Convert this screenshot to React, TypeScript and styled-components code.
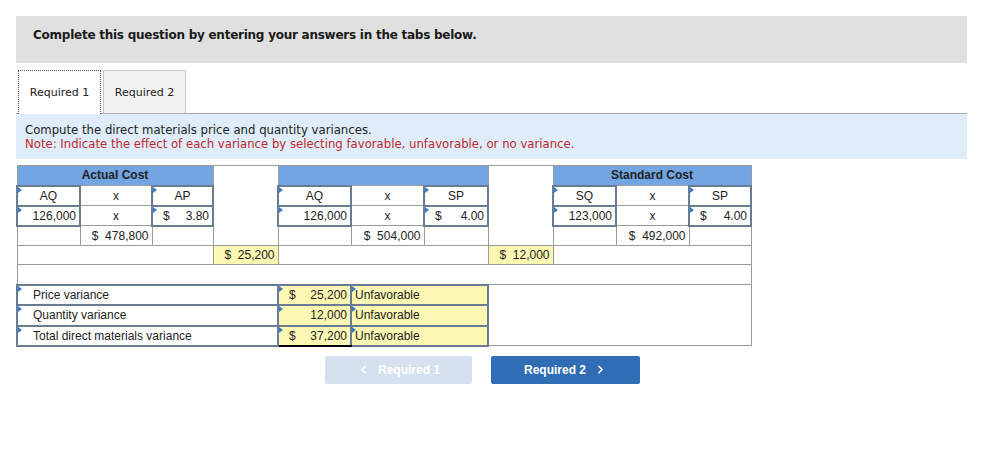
import React from "react";
import styled, { createGlobalStyle, css } from "styled-components";
import { ChevronLeft, ChevronRight } from "lucide-react";

const GlobalStyle = createGlobalStyle`
  body {
    margin: 0;
    background: #fff;
    font-family: "DejaVu Sans", Verdana, sans-serif;
    color: #222;
  }
`;

const Page = styled.div`
  width: 951px;
  padding: 16px;
`;

const Banner = styled.div`
  height: 47px;
  box-sizing: border-box;
  background: #e0e0e0;
  padding: 12px 0 0 17px;
  font-size: 12px;
  letter-spacing: -0.25px;
  font-weight: bold;
  color: #1a1a1a;
`;

const TabBar = styled.div`
  margin-top: 7px;
  height: 43px;
  display: flex;
  align-items: flex-end;
  gap: 2px;
  padding-left: 2px;
  border-bottom: 1px solid #a9a9a9;
`;

const Tab = styled.div<{ $active?: boolean }>`
  width: 83px;
  height: 43px;
  box-sizing: border-box;
  display: flex;
  align-items: center;
  justify-content: center;
  font-size: 11px;
  color: #222;
  ${(p) =>
    p.$active
      ? css`
          background: #fff;
          border: 1px dotted #555;
          border-bottom: none;
          height: 44px;
          margin-bottom: -1px;
        `
      : css`
          background: #f2f2f2;
          border: 1px solid #c8c8c8;
          border-bottom: none;
        `}
`;

const Instructions = styled.div`
  background: #deedf9;
  height: 45px;
  box-sizing: border-box;
  padding: 9px 9px;
  font-size: 11.7px;
  line-height: 14px;
`;

const Note = styled.div`
  color: #c0282d;
`;

const Grid = styled.table`
  margin-top: 6px;
  border-collapse: collapse;
  table-layout: fixed;
  width: 734px;
  font-family: "Liberation Sans", Arial, sans-serif;
  font-size: 12px;
  line-height: 14px;
  color: #222;
  border: 1px solid #9a9a9a;
`;

const Row = styled.tr<{ $h: number }>`
  height: ${(p) => p.$h}px;
`;

const Cell = styled.td<{ $align?: "left" | "center" | "right"; $fill?: string }>`
  padding: 0 3px;
  border: 1px solid #9a9a9a;
  text-align: ${(p) => p.$align || "center"};
  background: ${(p) => p.$fill || "#fff"};
  white-space: nowrap;
  vertical-align: middle;
`;

const HeadCell = styled.td<{ $blue?: boolean }>`
  padding: 0;
  border: 1px solid #9a9a9a;
  background: ${(p) => (p.$blue ? "#72a5e1" : "#fff")};
  text-align: center;
  font-weight: bold;
  color: #1f1f1f;
`;

const InputCell = styled.td<{ $align?: "left" | "center" | "right"; $fill?: string; $total?: boolean; $pad?: number }>`
  position: relative;
  padding: 0 3px 0 ${(p) => (p.$pad ?? 3)}px;
  border: 2px solid #687d93;
  ${(p) => p.$total && "border-bottom: 2px solid #000;"}
  text-align: ${(p) => p.$align || "center"};
  background: ${(p) => p.$fill || "#fff"};
  white-space: nowrap;
  vertical-align: middle;

  &::before {
    content: "";
    position: absolute;
    left: 0;
    top: 0;
    border-top: 3px solid transparent;
    border-bottom: 3px solid transparent;
    border-left: 4px solid #3b79c9;
  }
`;

const Money = styled.div`
  display: flex;
  justify-content: space-between;
`;

const ButtonRow = styled.div`
  display: flex;
  gap: 19px;
  margin-top: 9px;
  padding-left: 309px;
`;

const NavButton = styled.button<{ $disabled?: boolean }>`
  width: ${(p) => (p.$disabled ? 147 : 149)}px;
  height: 28px;
  border: none;
  border-radius: 2px;
  display: flex;
  align-items: center;
  justify-content: center;
  gap: 8px;
  font-family: "Liberation Sans", Arial, sans-serif;
  font-size: 12px;
  font-weight: bold;
  color: #fff;
  background: ${(p) => (p.$disabled ? "#d5e1ef" : "#2f6db4")};
`;

const YELLOW = "#fcf8b4";

export default function App() {
  return (
    <>
      <GlobalStyle />
      <Page>
        <Banner>Complete this question by entering your answers in the tabs below.</Banner>
        <TabBar>
          <Tab $active>Required 1</Tab>
          <Tab>Required 2</Tab>
        </TabBar>
        <Instructions>
          <div>Compute the direct materials price and quantity variances.</div>
          <Note>Note: Indicate the effect of each variance by selecting favorable, unfavorable, or no variance.</Note>
        </Instructions>

        <Grid>
          <colgroup>
            <col style={{ width: 63 }} />
            <col style={{ width: 72 }} />
            <col style={{ width: 61 }} />
            <col style={{ width: 65 }} />
            <col style={{ width: 73 }} />
            <col style={{ width: 73 }} />
            <col style={{ width: 64 }} />
            <col style={{ width: 65 }} />
            <col style={{ width: 63 }} />
            <col style={{ width: 73 }} />
            <col style={{ width: 62 }} />
          </colgroup>
          <tbody>
            <Row $h={20}>
              <HeadCell colSpan={3} $blue>Actual Cost</HeadCell>
              <Cell rowSpan={4} />
              <HeadCell colSpan={3} $blue />
              <Cell rowSpan={4} />
              <HeadCell colSpan={3} $blue>Standard Cost</HeadCell>
            </Row>
            <Row $h={20}>
              <InputCell>AQ</InputCell>
              <Cell>x</Cell>
              <InputCell>AP</InputCell>
              <InputCell>AQ</InputCell>
              <Cell>x</Cell>
              <InputCell>SP</InputCell>
              <InputCell>SQ</InputCell>
              <Cell>x</Cell>
              <InputCell>SP</InputCell>
            </Row>
            <Row $h={20}>
              <InputCell $align="right">126,000</InputCell>
              <Cell>x</Cell>
              <InputCell $pad={10}><Money><span>$</span><span>3.80</span></Money></InputCell>
              <InputCell $align="right">126,000</InputCell>
              <Cell>x</Cell>
              <InputCell $pad={10}><Money><span>$</span><span>4.00</span></Money></InputCell>
              <InputCell $align="right">123,000</InputCell>
              <Cell>x</Cell>
              <InputCell $pad={10}><Money><span>$</span><span>4.00</span></Money></InputCell>
            </Row>
            <Row $h={20}>
              <Cell />
              <Cell $align="right">$&nbsp;&nbsp;478,800</Cell>
              <Cell />
              <Cell />
              <Cell $align="right">$&nbsp;&nbsp;504,000</Cell>
              <Cell />
              <Cell />
              <Cell $align="right">$&nbsp;&nbsp;492,000</Cell>
              <Cell />
            </Row>
            <Row $h={19}>
              <Cell colSpan={3} />
              <Cell $align="right" $fill={YELLOW}>$&nbsp;&nbsp;25,200</Cell>
              <Cell colSpan={3} />
              <Cell $align="right" $fill={YELLOW}>$&nbsp;&nbsp;12,000</Cell>
              <Cell colSpan={3} />
            </Row>
            <Row $h={20}>
              <Cell colSpan={11} />
            </Row>
            <Row $h={20}>
              <InputCell colSpan={4} $align="left" $pad={15}>Price variance</InputCell>
              <InputCell $fill={YELLOW} $pad={10}><Money><span>$</span><span>25,200</span></Money></InputCell>
              <InputCell colSpan={2} $align="left" $fill={YELLOW}>Unfavorable</InputCell>
              <Cell colSpan={4} rowSpan={3} />
            </Row>
            <Row $h={21}>
              <InputCell colSpan={4} $align="left" $pad={15}>Quantity variance</InputCell>
              <InputCell $fill={YELLOW} $align="right">12,000</InputCell>
              <InputCell colSpan={2} $align="left" $fill={YELLOW}>Unfavorable</InputCell>
            </Row>
            <Row $h={20}>
              <InputCell colSpan={4} $align="left" $pad={15}>Total direct materials variance</InputCell>
              <InputCell $fill={YELLOW} $pad={10} $total><Money><span>$</span><span>37,200</span></Money></InputCell>
              <InputCell colSpan={2} $align="left" $fill={YELLOW}>Unfavorable</InputCell>
            </Row>
          </tbody>
        </Grid>

        <ButtonRow>
          <NavButton $disabled>
            <ChevronLeft size={13} strokeWidth={3} />
            Required 1
          </NavButton>
          <NavButton>
            Required 2
            <ChevronRight size={13} strokeWidth={3} />
          </NavButton>
        </ButtonRow>
      </Page>
    </>
  );
}
